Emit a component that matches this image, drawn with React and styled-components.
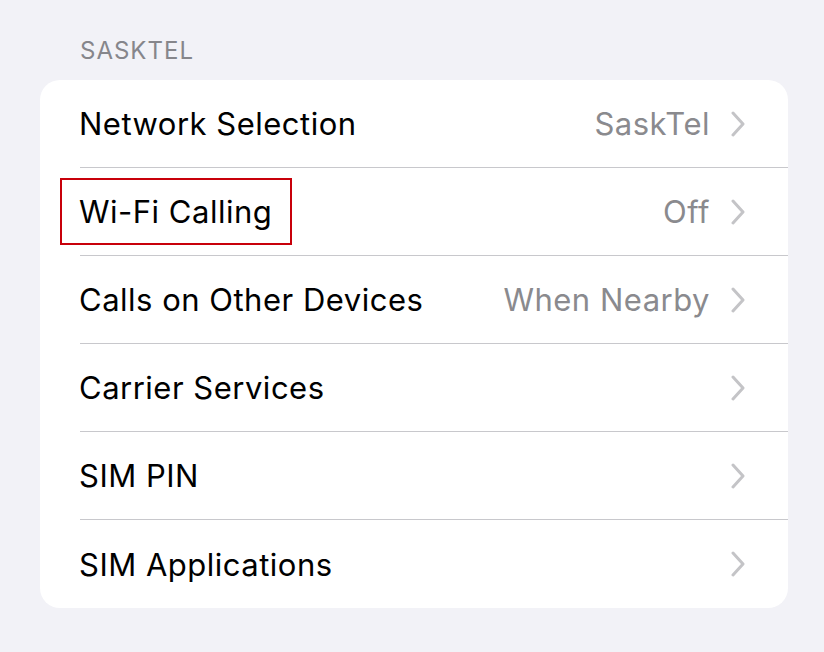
import styled, { createGlobalStyle } from "styled-components"

const GlobalStyle = createGlobalStyle`
  html, body {
    margin: 0;
    padding: 0;
    background: #f2f2f7;
    font-family: Inter, "Noto Sans", sans-serif;
    -webkit-font-smoothing: antialiased;
  }
`

const rows = [
  { label: "Network Selection", value: "SaskTel" },
  { label: "Wi-Fi Calling", value: "Off", highlighted: true },
  { label: "Calls on Other Devices", value: "When Nearby" },
  { label: "Carrier Services" },
  { label: "SIM PIN" },
  { label: "SIM Applications" },
]

const Chevron = () => (
  <ChevronIcon viewBox="0 0 16 26" width="16" height="26">
    <path d="M3 2 L13 13 L3 24" fill="none" stroke="#c4c4c7" strokeWidth="3" strokeLinecap="round" strokeLinejoin="round" />
  </ChevronIcon>
)

const App = () => {
  return (
    <Page>
      <GlobalStyle />
      <SectionHeader>SASKTEL</SectionHeader>
      <Card>
        {rows.map((row) => (
          <Row key={row.label}>
            <Label $highlighted={row.highlighted}>{row.label}</Label>
            <Trailing>
              {row.value && <Value>{row.value}</Value>}
              <Chevron />
            </Trailing>
          </Row>
        ))}
      </Card>
    </Page>
  )
}

const Page = styled.div`
  width: 824px;
  height: 652px;
  box-sizing: border-box;
  padding: 36px 36px 0 40px;
  background: #f2f2f7;
`

const SectionHeader = styled.div`
  padding-left: 40px;
  height: 44px;
  font-size: 24px;
  letter-spacing: 1px;
  line-height: 30px;
  color: #86868b;
`

const Card = styled.div`
  background: #ffffff;
  border-radius: 20px;
  overflow: hidden;
`

const Row = styled.div`
  height: 88px;
  margin-left: 40px;
  padding-right: 42px;
  display: flex;
  align-items: center;
  justify-content: space-between;
  box-sizing: border-box;
  border-bottom: 1.5px solid #c8c8cc;

  &:last-child {
    border-bottom: none;
  }
`

const Label = styled.span`
  font-size: 31px;
  color: #000000;
  letter-spacing: 0.5px;
  box-sizing: border-box;
  height: 67px;
  display: flex;
  align-items: center;
  padding: 0 18px 0 17px;
  margin-left: -20px;
  border: 2px solid ${(p) => (p.$highlighted ? "#c8000a" : "transparent")};
`

const Trailing = styled.div`
  display: flex;
  align-items: center;
  gap: 20px;
`

const Value = styled.span`
  font-size: 31px;
  letter-spacing: 0.5px;
  color: #8a8a8e;
`

const ChevronIcon = styled.svg`
  display: block;
`

export default App
